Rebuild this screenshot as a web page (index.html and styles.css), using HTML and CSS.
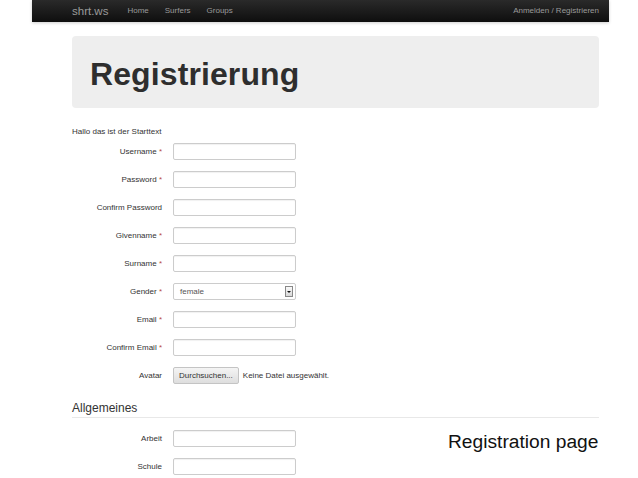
FILE: index.html
```html
<!DOCTYPE html>
<html lang="de">

<head>
    <meta charset="UTF-8">
    <meta name="viewport" content="width=device-width, initial-scale=1.0">
    <title>Registrierung - shrt.ws</title>
    <link rel="stylesheet" href="styles.css">
</head>

<body>

    <div class="screenshot">
        <div class="navbar">
            <a class="brand" href="#">shrt.ws</a>
            <ul class="nav">
                <li><a href="#">Home</a></li>
                <li><a href="#">Surfers</a></li>
                <li><a href="#">Groups</a></li>
            </ul>
            <a class="login" href="#">Anmelden / Registrieren</a>
        </div>

        <div class="contenido">
            <div class="jumbotron">
                <h1>Registrierung</h1>
            </div>

            <p class="intro">Hallo das ist der Starttext</p>

            <form class="formulario">
                <div class="fila">
                    <label>Username <span class="req">*</span></label>
                    <input type="text">
                </div>
                <div class="fila">
                    <label>Password <span class="req">*</span></label>
                    <input type="password">
                </div>
                <div class="fila">
                    <label>Confirm Password</label>
                    <input type="password">
                </div>
                <div class="fila">
                    <label>Givenname <span class="req">*</span></label>
                    <input type="text">
                </div>
                <div class="fila">
                    <label>Surname <span class="req">*</span></label>
                    <input type="text">
                </div>
                <div class="fila">
                    <label>Gender <span class="req">*</span></label>
                    <div class="select">
                        <span>female</span>
                        <span class="flecha"></span>
                    </div>
                </div>
                <div class="fila">
                    <label>Email <span class="req">*</span></label>
                    <input type="text">
                </div>
                <div class="fila">
                    <label>Confirm Email <span class="req">*</span></label>
                    <input type="text">
                </div>
                <div class="fila">
                    <label>Avatar</label>
                    <button type="button" class="archivo">Durchsuchen...</button>
                    <span class="sin-archivo">Keine Datei ausgewählt.</span>
                </div>

                <h3 class="seccion">Allgemeines</h3>

                <div class="fila">
                    <label>Arbeit</label>
                    <input type="text">
                </div>
                <div class="fila">
                    <label>Schule</label>
                    <input type="text">
                </div>
            </form>
        </div>
    </div>

    <p class="leyenda">Registration page</p>

</body>

</html>
```

FILE: styles.css
```css
body {
    margin: 0;
    background-color: #fff;
    font-family: "Liberation Sans", Arial, sans-serif;
    color: #333;
    overflow: hidden;
}

.screenshot {
    width: 577px;
    margin-left: 32px;
}

.navbar {
    display: flex;
    align-items: center;
    height: 21px;
    padding: 0 10px 1px 40px;
    background: linear-gradient(#2a2a2a, #0e0e0e);
    box-shadow: 0 1px 3px rgba(0, 0, 0, 0.2);
}

.navbar a {
    color: #9a9a9a;
    text-decoration: none;
}

.brand {
    font-size: 11.5px;
    margin-right: 19px;
}

.nav {
    display: flex;
    gap: 16px;
    list-style: none;
    margin: 0;
    padding: 0;
    font-size: 8px;
}

.login {
    margin-left: auto;
    font-size: 8px;
}

.contenido {
    padding: 0 10px 0 40px;
}

.jumbotron {
    box-sizing: border-box;
    margin-top: 14px;
    height: 72px;
    padding: 4px 0 0 18px;
    background-color: #eeeeee;
    border-radius: 4px;
    display: flex;
    align-items: center;
}

.jumbotron h1 {
    margin: 0;
    font-size: 32px;
    font-weight: bold;
    color: #2e2e2e;
    letter-spacing: 0.1px;
}

.intro {
    margin: 18px 0 0;
    font-size: 8px;
    line-height: 12px;
}

.formulario {
    margin-top: 5px;
}

.fila {
    display: flex;
    align-items: center;
    height: 17px;
    margin-bottom: 11px;
}

.fila label {
    width: 90px;
    margin-right: 11px;
    text-align: right;
    font-size: 8px;
    color: #333;
}

.req {
    color: #b94a48;
}

.fila input {
    box-sizing: border-box;
    width: 123px;
    height: 17px;
    margin: 0;
    padding: 0 4px;
    border: 1px solid #cccccc;
    border-radius: 2px;
    box-shadow: inset 0 1px 1px rgba(0, 0, 0, 0.06);
    background-color: #fff;
}

.select {
    box-sizing: border-box;
    width: 123px;
    height: 17px;
    display: flex;
    align-items: center;
    justify-content: space-between;
    padding: 0 2px 0 6px;
    border: 1px solid #cccccc;
    border-radius: 2px;
    font-size: 8px;
    color: #555;
}

.flecha {
    width: 6px;
    height: 9px;
    border: 1px solid #888;
    background: linear-gradient(#fafafa, #d8d8d8);
    position: relative;
}

.flecha::after {
    content: "";
    position: absolute;
    left: 1px;
    top: 4px;
    border-left: 2px solid transparent;
    border-right: 2px solid transparent;
    border-top: 2px solid #111;
}

.archivo {
    height: 17px;
    padding: 0 5px;
    font-family: "Liberation Sans", Arial, sans-serif;
    font-size: 8px;
    color: #333;
    border: 1px solid #c4c4c4;
    border-radius: 2px;
    background: linear-gradient(#f4f4f4, #dedede);
}

.sin-archivo {
    margin-left: 4px;
    font-size: 8px;
}

.seccion {
    margin: 15px 0 12px;
    font-size: 12px;
    font-weight: normal;
    line-height: 18px;
    color: #333;
    border-bottom: 1px solid #e8e8e8;
}

.leyenda {
    position: absolute;
    left: 448px;
    top: 430px;
    margin: 0;
    font-size: 19.2px;
    line-height: 24px;
    color: #111;
}
```
